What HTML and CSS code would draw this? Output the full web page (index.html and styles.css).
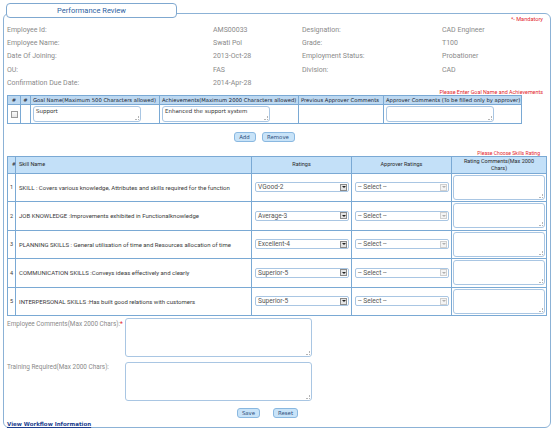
FILE: index.html
```html
<!DOCTYPE html>
<html>
<head>
<meta charset="utf-8">
<title>Performance Review</title>
<link rel="stylesheet" href="styles.css">
</head>
<body>
<div class="panel">
  <div class="legend">Performance Review</div>
  <div class="mandatory">*- Mandatory</div>
  <div class="info">
    <span>Employee Id:</span><span>AMS00033</span><span>Designation:</span><span>CAD Engineer</span>
    <span>Employee Name:</span><span>Swati Pol</span><span>Grade:</span><span>T100</span>
    <span>Date Of Joining:</span><span>2013-Oct-28</span><span>Employment Status:</span><span>Probationer</span>
    <span>OU:</span><span>FAS</span><span>Division:</span><span>CAD</span>
    <span>Confirmation Due Date:</span><span>2014-Apr-28</span><span></span><span></span>
  </div>
  <div class="note">Please Enter Goal Name and Achievements</div>
  <div class="goal-wrap">
    <table class="goals">
      <colgroup><col class="g1"><col class="g2"><col class="g3"><col class="g4"><col class="g5"><col class="g6"></colgroup>
      <thead>
        <tr><th>#</th><th>#</th><th class="l">Goal Name(Maximum 500 Characters allowed)</th><th class="l">Achievements(Maximum 2000 Characters allowed)</th><th class="l">Previous Approver Comments</th><th class="l">Approver Comments (To be filled only by approver)</th></tr>
      </thead>
      <tbody>
        <tr>
          <td class="c"><input type="checkbox" class="chk"></td>
          <td></td>
          <td><span class="ta goal-ta"><textarea>Support</textarea></span></td>
          <td><span class="ta goal-ta"><textarea>Enhanced the support system</textarea></span></td>
          <td></td>
          <td><span class="ta goal-ta"><textarea></textarea></span></td>
        </tr>
      </tbody>
    </table>
    <div class="btn-row"><button class="btn w-add">Add</button><button class="btn w-remove">Remove</button></div>
  </div>
  <div class="note note2">Please Choose Skills Rating</div>
  <table class="skills">
    <colgroup><col class="s1"><col class="s2"><col class="s3"><col class="s4"><col class="s5"></colgroup>
    <thead>
      <tr><th>#</th><th class="l">Skill Name</th><th>Ratings</th><th>Approver Ratings</th><th>Rating Comments(Max 2000 Chars)</th></tr>
    </thead>
    <tbody>
      <tr>
        <td class="c">1</td><td class="name">SKILL : Covers various knowledge, Attributes and skills required for the function</td>
        <td class="selc"><div class="sel"><span class="sel-val">VGood-2</span><span class="sel-btn"><i></i></span></div></td>
        <td class="selc"><div class="sel dis"><span class="sel-val">-- Select --</span><span class="sel-btn"><i></i></span></div></td>
        <td class="tac"><span class="ta rate-ta"><textarea></textarea></span></td>
      </tr>
      <tr>
        <td class="c">2</td><td class="name">JOB KNOWLEDGE :Improvements exhibited in Functionalknowledge</td>
        <td class="selc"><div class="sel"><span class="sel-val">Average-3</span><span class="sel-btn"><i></i></span></div></td>
        <td class="selc"><div class="sel dis"><span class="sel-val">-- Select --</span><span class="sel-btn"><i></i></span></div></td>
        <td class="tac"><span class="ta rate-ta"><textarea></textarea></span></td>
      </tr>
      <tr>
        <td class="c">3</td><td class="name">PLANNING SKILLS : General utilisation of time and Resources allocation of time</td>
        <td class="selc"><div class="sel"><span class="sel-val">Excellent-4</span><span class="sel-btn"><i></i></span></div></td>
        <td class="selc"><div class="sel dis"><span class="sel-val">-- Select --</span><span class="sel-btn"><i></i></span></div></td>
        <td class="tac"><span class="ta rate-ta"><textarea></textarea></span></td>
      </tr>
      <tr>
        <td class="c">4</td><td class="name">COMMUNICATION SKILLS :Conveys ideas effectively and clearly</td>
        <td class="selc"><div class="sel"><span class="sel-val">Superior-5</span><span class="sel-btn"><i></i></span></div></td>
        <td class="selc"><div class="sel dis"><span class="sel-val">-- Select --</span><span class="sel-btn"><i></i></span></div></td>
        <td class="tac"><span class="ta rate-ta"><textarea></textarea></span></td>
      </tr>
      <tr>
        <td class="c">5</td><td class="name">INTERPERSONAL SKILLS :Has built good relations with customers</td>
        <td class="selc"><div class="sel"><span class="sel-val">Superior-5</span><span class="sel-btn"><i></i></span></div></td>
        <td class="selc"><div class="sel dis"><span class="sel-val">-- Select --</span><span class="sel-btn"><i></i></span></div></td>
        <td class="tac"><span class="ta rate-ta"><textarea></textarea></span></td>
      </tr>
    </tbody>
  </table>
  <div class="crow first">
    <label class="clabel">Employee Comments(Max 2000 Chars):<span class="req">*</span></label>
    <span class="ta big-ta"><textarea></textarea></span>
  </div>
  <div class="crow second">
    <label class="clabel">Training Required(Max 2000 Chars):</label>
    <span class="ta big-ta"><textarea></textarea></span>
  </div>
  <div class="save-row"><button class="btn w-save">Save</button><button class="btn w-reset">Reset</button></div>
  <a class="workflow" href="#">View Workflow Information</a>
</div>
</body>
</html>
```

FILE: styles.css
```css
* { box-sizing: border-box; }
html, body { margin: 0; padding: 0; background: #fff; }
body {
  width: 554px;
  height: 430px;
  overflow: hidden;
  font-family: Roboto, "Liberation Sans", sans-serif;
}

.panel {
  position: relative;
  margin: 13px 0 0 3px;
  width: 548px;
  height: 415px;
  border: 1px solid #8cb2d6;
  border-radius: 6px;
  padding: 2px 4px 0 3px;
}

.legend {
  position: absolute;
  top: -11px;
  left: 2px;
  width: 171px;
  height: 15px;
  border: 1px solid #7fa8d0;
  border-radius: 4px;
  background: #fff;
  text-align: center;
  font-size: 7.5px;
  line-height: 13px;
  color: #2d5f9f;
}

.mandatory {
  height: 7px;
  line-height: 7px;
  font-size: 5.6px;
  text-align: right;
  color: #e3262d;
  padding-right: 3px;
}

.info {
  display: grid;
  grid-template-columns: 206px 89px 140px 1fr;
  grid-auto-rows: 13.33px;
  align-items: center;
  font-size: 7px;
  color: #8a8a8a;
}

.note {
  height: 5px;
  line-height: 5px;
  font-size: 5.4px;
  color: #e3262d;
  text-align: right;
  padding-right: 3px;
  white-space: nowrap;
}
.note2 { margin-top: 9px; padding-right: 6px; font-size: 5.1px; }

.goal-wrap { width: 514px; }

table { border-collapse: collapse; table-layout: fixed; }
th, td { border: 1px solid #7aa9d4; padding: 0; }

.goals { width: 514px; }
.goals .g1 { width: 13px; }
.goals .g2 { width: 10px; }
.goals .g3 { width: 129px; }
.goals .g4 { width: 139px; }
.goals .g5 { width: 85px; }
.goals .g6 { width: 138px; }
.goals th {
  height: 9px;
  background: #bcd8f1;
  font-family: "DejaVu Sans", sans-serif;
  font-size: 5.25px;
  font-weight: normal;
  color: #15202e;
  white-space: nowrap;
  overflow: hidden;
  padding: 0 1px;
}
.goals th.l { text-align: left; padding-left: 2px; }
.goals td { height: 19px; vertical-align: top; padding: 1px 0 0 2px; }
.goals td.c { text-align: center; vertical-align: middle; padding: 0; }

.chk {
  -webkit-appearance: none;
  appearance: none;
  display: block;
  margin: 1px auto 0;
  width: 7px;
  height: 7px;
  border: 1px solid #9a9a9a;
  background: linear-gradient(#fbfbfb, #e6e6e6);
}

.ta { position: relative; display: block; }
.ta textarea {
  display: block;
  width: 100%;
  height: 100%;
  margin: 0;
  border: 1px solid #a9c6e3;
  border-radius: 3px;
  resize: none;
  padding: 1px 2px;
  font-family: "DejaVu Sans", sans-serif;
  font-size: 5.5px;
  color: #333;
  background: #fff;
  outline: none;
  overflow: hidden;
}
.ta::after {
  content: "";
  position: absolute;
  right: 2px;
  bottom: 2px;
  width: 3px;
  height: 3px;
  border-right: 1px dotted #b5b5b5;
  border-bottom: 1px dotted #b5b5b5;
}
.goal-ta { width: 108px; height: 16px; }

.btn-row {
  display: flex;
  justify-content: center;
  gap: 6px;
  margin-top: 8px;
}
.btn {
  height: 10px;
  padding: 0;
  border: 1px solid #8ab8e0;
  border-radius: 3px;
  background: #c8e3f8;
  font-family: "DejaVu Sans", sans-serif;
  font-size: 5.4px;
  color: #2b4c7a;
  line-height: 8px;
}
.w-add { width: 22px; }
.w-remove { width: 33px; }
.w-save { width: 23px; }
.w-reset { width: 25px; }

.skills { width: 539px; }
.skills .s1 { width: 8px; }
.skills .s2 { width: 236px; }
.skills .s3 { width: 100px; }
.skills .s4 { width: 100px; }
.skills .s5 { width: 95px; }
.skills th {
  height: 17px;
  background: #c3e0f8;
  font-size: 5.5px;
  font-weight: normal;
  color: #2a2a2a;
  text-align: center;
  line-height: 6.5px;
  padding: 0 4px;
}
.skills th.l { text-align: left; padding-left: 3px; }
.skills td {
  height: 28.5px;
  font-size: 6px;
  color: #3a3a3a;
  vertical-align: middle;
}
.skills td.c { text-align: center; font-size: 5.5px; }
.skills td.name { padding-left: 3px; white-space: nowrap; }
.skills td.selc { padding: 0 3px; }
.skills td.tac { padding: 1px; vertical-align: top; }
.rate-ta { width: 92px; height: 25px; }

.sel {
  display: flex;
  align-items: center;
  width: 94px;
  height: 10px;
  border: 1px solid #a9c6e3;
  border-radius: 2px;
  background: #fff;
  padding: 0 1px 0 2px;
}
.sel-val { flex: 1; font-size: 6.6px; line-height: 8px; color: #555; white-space: nowrap; }
.sel-btn {
  width: 7px;
  height: 7px;
  border: 1px solid #8a8a8a;
  background: #e4e4e4;
  display: flex;
  align-items: center;
  justify-content: center;
}
.sel-btn i {
  display: block;
  border-left: 2px solid transparent;
  border-right: 2px solid transparent;
  border-top: 2px solid #222;
}
.sel.dis .sel-btn { border-color: #cfcfcf; background: #f4f4f4; }
.sel.dis .sel-btn i { border-top-color: #b0b0b0; }

.crow { display: flex; align-items: flex-start; }
.crow.first { margin-top: 2px; }
.crow.second { margin-top: 5px; }
.clabel {
  width: 118px;
  font-size: 6.4px;
  line-height: 7px;
  color: #8a8a8a;
  padding-top: 3px;
  white-space: nowrap;
}
.crow.second .clabel { padding-top: 2px; }
.req { color: #e3262d; }
.big-ta { width: 187px; height: 39px; }

.save-row {
  display: flex;
  gap: 13px;
  padding-left: 230px;
  margin-top: 6.5px;
}

.workflow {
  display: block;
  margin-top: 3px;
  font-family: "DejaVu Sans", sans-serif;
  font-weight: bold;
  font-size: 5.5px;
  line-height: 7px;
  color: #1d3f8f;
  text-decoration: underline;
}
```
